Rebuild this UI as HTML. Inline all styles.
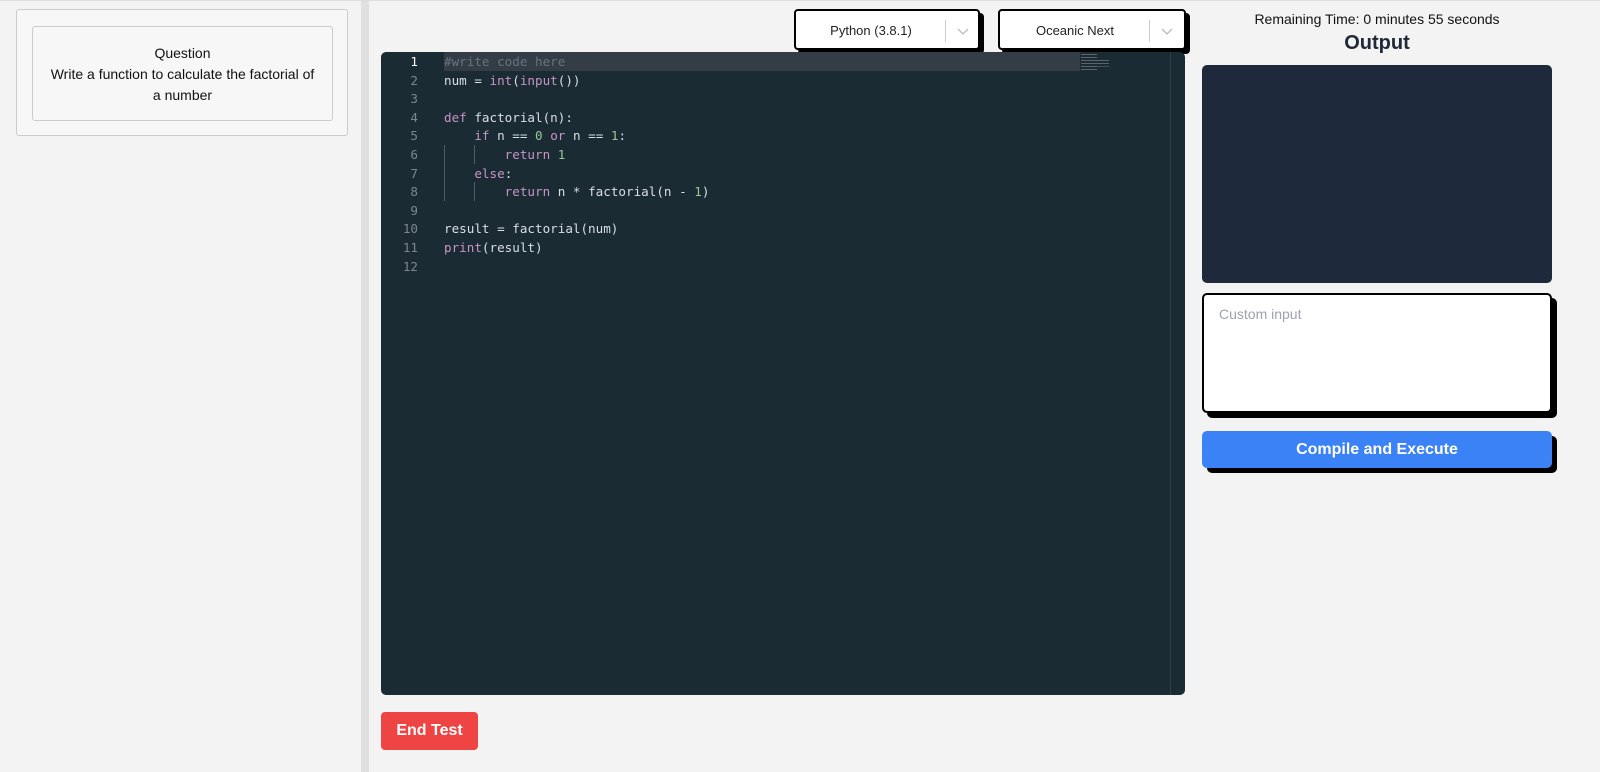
<!DOCTYPE html>
<html><head><style>
body{margin:0;width:1600px;height:772px;background:#f3f3f3;font-family:"Liberation Sans",sans-serif;position:relative;overflow:hidden}
.top{position:absolute;left:0;top:0;width:1600px;height:1px;background:#ddd}
.split{position:absolute;left:361px;top:1px;width:8px;height:771px;background:#e0e0e0}
.q1{position:absolute;left:16px;top:9px;width:332px;height:127px;border:1px solid #ccc;border-radius:3px;background:#f7f7f7;box-sizing:border-box}
.q2{position:absolute;left:32px;top:26px;width:301px;height:95px;border:1px solid #ccc;border-radius:3px;box-sizing:border-box;text-align:center;font-size:14px;line-height:21px;padding-top:16px;color:#111}
.sel{position:absolute;top:9px;height:41px;background:#fff;border:2px solid #000;border-radius:4px;box-sizing:border-box;box-shadow:4px 4px 0 #000;font-size:13px;color:#222}
.sel .t{position:absolute;top:12px;text-align:center}
.sel .d{position:absolute;top:9px;width:1px;height:22px;background:#ccc}
.sel svg{position:absolute;top:15px}
.ed{position:absolute;left:381px;top:52px;width:804px;height:643px;background:#1b2b34;border-radius:5px;overflow:hidden;font-family:"DejaVu Sans Mono","Liberation Mono",monospace;font-size:12.6px}
.hl{position:absolute;left:63px;top:0;width:636px;height:18.6px;background:#343d46}
.ln{position:absolute;left:0;width:37px;text-align:right;color:#7a8690}
.cl{position:absolute;left:63px;color:#d8dee9;white-space:pre}
.k{color:#c594c5}.n{color:#99c794}.c{color:#65737e}.f{color:#c594c5}
.g{position:absolute;width:1px;background:#4f5b66}
.out{position:absolute;left:1202px;top:65px;width:350px;height:218px;background:#1e293b;border-radius:5px}
.ta{position:absolute;left:1202px;top:293px;width:350px;height:120px;background:#fff;border:2px solid #000;border-radius:5px;box-sizing:border-box;box-shadow:5px 5px 0 #000;color:#9ca3af;font-size:14px;padding:11px 15px}
.btn{position:absolute;left:1202px;top:431px;width:350px;height:37px;background:#3b82f6;border-radius:5px;box-shadow:5px 5px 0 #000;color:#fff;font-weight:bold;font-size:16px;text-align:center;line-height:37px}
.end{position:absolute;left:381px;top:712px;width:97px;height:38px;background:#ef4444;border-radius:4px;color:#fff;font-weight:bold;font-size:16px;text-align:center;line-height:38px}
</style></head><body>
<div class="top"></div>
<div class="split"></div>
<div class="q1"></div>
<div class="q2">Question<br>Write a function to calculate the factorial of<br>a number</div>

<div class="sel" style="left:794px;width:186px"><span class="t" style="left:0;width:150px">Python (3.8.1)</span><span class="d" style="left:149px"></span><svg style="left:160px" width="14" height="10"><path d="M2 3l5 5 5-5" stroke="#bbb" fill="none" stroke-width="1.3"/></svg></div>
<div class="sel" style="left:998px;width:188px"><span class="t" style="left:0;width:150px">Oceanic Next</span><span class="d" style="left:149px"></span><svg style="left:160px" width="14" height="10"><path d="M2 3l5 5 5-5" stroke="#bbb" fill="none" stroke-width="1.3"/></svg></div>

<div class="ed">
<div class="hl"></div>
<div style="position:absolute;left:789px;top:0;width:1px;height:643px;background:#2e3f48"></div>
<div style="position:absolute;left:700px;top:2px;width:40px;height:18px;opacity:.45;background:repeating-linear-gradient(#aaa 0 1px,transparent 1px 3px);clip-path:polygon(0 0,40% 0,40% 30%,70% 30%,70% 70%,40% 70%,40% 100%,0 100%)"></div>
<div class="g" style="left:63px;top:93px;height:56px"></div>
<div class="g" style="left:93px;top:93px;height:19px"></div>
<div class="g" style="left:93px;top:130px;height:19px"></div>
<div class="ln" style="top:2px;color:#fff">1</div><div class="cl c" style="top:2px">#write code here</div>
<div class="ln" style="top:20.6px">2</div><div class="cl" style="top:20.6px">num = <span class="f">int</span>(<span class="f">input</span>())</div>
<div class="ln" style="top:39.2px">3</div>
<div class="ln" style="top:57.8px">4</div><div class="cl" style="top:57.8px"><span class="k">def</span> factorial(n):</div>
<div class="ln" style="top:76.4px">5</div><div class="cl" style="top:76.4px">    <span class="k">if</span> n == <span class="n">0</span> <span class="k">or</span> n == <span class="n">1</span>:</div>
<div class="ln" style="top:95px">6</div><div class="cl" style="top:95px">        <span class="k">return</span> <span class="n">1</span></div>
<div class="ln" style="top:113.6px">7</div><div class="cl" style="top:113.6px">    <span class="k">else</span>:</div>
<div class="ln" style="top:132.2px">8</div><div class="cl" style="top:132.2px">        <span class="k">return</span> n * factorial(n - <span class="n">1</span>)</div>
<div class="ln" style="top:150.8px">9</div>
<div class="ln" style="top:169.4px">10</div><div class="cl" style="top:169.4px">result = factorial(num)</div>
<div class="ln" style="top:188px">11</div><div class="cl" style="top:188px"><span class="f">print</span>(result)</div>
<div class="ln" style="top:206.6px">12</div>
</div>

<div style="position:absolute;left:1202px;top:11px;width:350px;text-align:center;font-size:14px;color:#111">Remaining Time: 0 minutes 55 seconds</div>
<div style="position:absolute;left:1202px;top:32px;width:350px;text-align:center;font-size:20px;font-weight:bold;color:#1f2937">Output</div>
<div class="out"></div>
<div class="ta">Custom input</div>
<div class="btn">Compile and Execute</div>
<div class="end">End Test</div>
</body></html>
